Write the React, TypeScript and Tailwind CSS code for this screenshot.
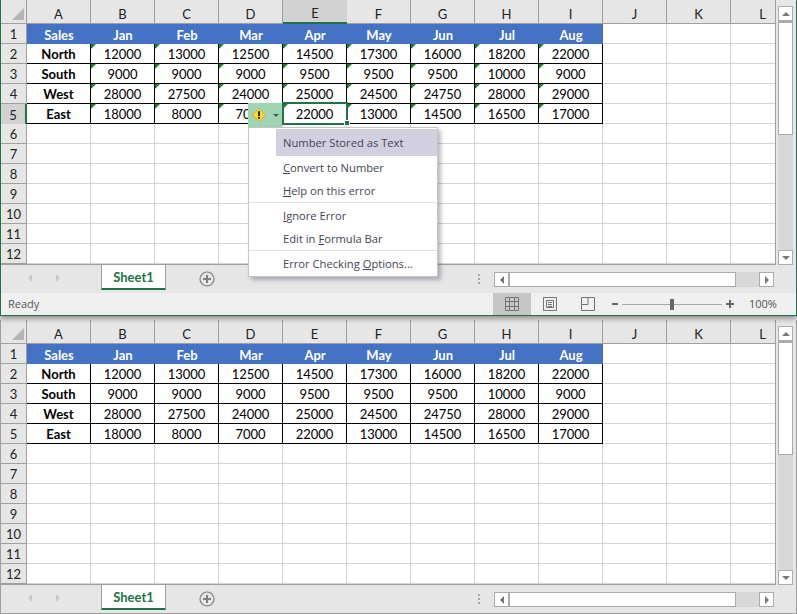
import type { ReactNode } from "react";

const COLS = ["A", "B", "C", "D", "E", "F", "G", "H", "I", "J", "K", "L"];
const ROW_NUMS = [1, 2, 3, 4, 5, 6, 7, 8, 9, 10, 11, 12];

const TABLE = [
  ["Sales", "Jan", "Feb", "Mar", "Apr", "May", "Jun", "Jul", "Aug"],
  ["North", "12000", "13000", "12500", "14500", "17300", "16000", "18200", "22000"],
  ["South", "9000", "9000", "9000", "9500", "9500", "9500", "10000", "9000"],
  ["West", "28000", "27500", "24000", "25000", "24500", "24750", "28000", "29000"],
  ["East", "18000", "8000", "7000", "22000", "13000", "14500", "16500", "17000"],
];

const CELL_FONT = "font-['Lato',sans-serif] text-[13px] leading-none";
const UI_FONT = "font-['Open_Sans',sans-serif]";

function GridCell({ row, col, flagged }: { row: number; col: number; flagged: boolean }) {
  const value = TABLE[row]?.[col];
  const inTable = row < 5 && col < 9;

  if (row === 0 && inTable) {
    return (
      <div className={`flex h-5 items-center justify-center bg-[#4472c4] pt-[2px] font-bold text-white ${CELL_FONT}`}>
        {value}
      </div>
    );
  }

  if (inTable) {
    return (
      <div
        className={`relative flex h-5 items-center justify-center border-r border-b border-black pt-[2px] text-black ${CELL_FONT} ${col === 0 ? "font-bold" : ""}`}
      >
        {flagged && col > 0 && (
          <span className="absolute top-0 left-0 h-0 w-0 border-t-[5px] border-r-[5px] border-t-[#1f7a3c] border-r-transparent" />
        )}
        {value}
      </div>
    );
  }

  return <div className="h-5 border-r border-b border-[#d4d4d4]" />;
}

function GridRow({ n, flagged }: { n: number; flagged: boolean }) {
  const active = flagged && n === 5;
  return (
    <>
      <div
        className={`flex h-5 items-center justify-center pt-[2px] text-[#222] ${CELL_FONT} ${
          active ? "border-r-2 border-[#217346] bg-[#d2d2d2]" : "border-r border-b border-[#9f9f9f] bg-[#e6e6e6]"
        }`}
      >
        {n}
      </div>
      {COLS.map((_, c) => (
        <GridCell key={c} row={n - 1} col={c} flagged={flagged} />
      ))}
    </>
  );
}

function Grid({ flagged }: { flagged: boolean }) {
  return (
    <div className="h-[265px] w-[775px] shrink-0 overflow-hidden border-r border-b border-[#9f9f9f] bg-white">
      <div className="grid w-max grid-cols-[26px_repeat(12,64px)]">
        <div className="relative h-6 border-r border-b border-[#9f9f9f] bg-[#e6e6e6]">
          <span className="absolute right-[2px] bottom-[3px] h-0 w-0 border-b-[12px] border-l-[12px] border-b-[#b4b4b4] border-l-transparent" />
        </div>
        {COLS.map((c) => (
          <div
            key={c}
            className={`flex h-6 items-end justify-center border-b pb-[2px] leading-[18px] text-[#222] ${CELL_FONT} ${
              flagged && c === "E"
                ? "border-b-2 border-[#217346] bg-[#d2d2d2]"
                : "border-r border-[#9f9f9f] bg-[#e6e6e6]"
            }`}
          >
            {c}
          </div>
        ))}
        {ROW_NUMS.map((n) => (
          <GridRow key={n} n={n} flagged={flagged} />
        ))}
      </div>
    </div>
  );
}

function ScrollButton({ dir }: { dir: "up" | "down" | "left" | "right" }) {
  const points = {
    up: "2,8 10,8 6,4",
    down: "2,4 10,4 6,8",
    left: "8,2 8,10 4,6",
    right: "4,2 4,10 8,6",
  }[dir];
  return (
    <div className="flex h-[15px] w-[15px] shrink-0 items-center justify-center border border-[#ababab] bg-white">
      <svg width="12" height="12" viewBox="0 0 12 12">
        <polygon points={points} fill="#777" />
      </svg>
    </div>
  );
}

function VScroll() {
  return (
    <div className="flex h-[265px] w-5 shrink-0 flex-col bg-[#e6e6e6] pt-[6px] pl-[2px]">
      <ScrollButton dir="up" />
      <div className="h-[114px] w-[15px] border-x border-b border-t-2 border-[#ababab] bg-white" />
      <div className="h-[115px] w-[15px] bg-[#d8d8d8]" />
      <ScrollButton dir="down" />
    </div>
  );
}

function TabBar() {
  return (
    <div className="flex h-7 shrink-0 bg-[#e6e6e6]">
      <div className="flex w-[100px] items-center gap-[20px] pb-[2px] pl-[25px]">
        <svg width="8" height="10" viewBox="0 0 8 10">
          <polygon points="6,1 6,9 2,5" fill="#c8c8c8" />
        </svg>
        <svg width="8" height="10" viewBox="0 0 8 10">
          <polygon points="2,1 2,9 6,5" fill="#c8c8c8" />
        </svg>
      </div>
      <div
        className={`flex h-[25px] w-[65px] items-center justify-center border-x border-b-2 border-x-[#9f9f9f] border-b-[#217346] bg-white pt-[2px] font-bold text-[#217346] ${CELL_FONT}`}
      >
        Sheet1
      </div>
      <div className="flex w-[83px] items-center pb-px pl-[33px]">
        <svg width="16" height="16" viewBox="0 0 16 16" fill="none" stroke="#808080">
          <circle cx="8" cy="8" r="7" strokeWidth="1.2" />
          <path d="M4 8h8M8 4v8" strokeWidth="2" />
        </svg>
      </div>
      <div className="flex w-[230px] items-center pb-px pl-[229px]">
        <div className="flex flex-col gap-[2px]">
          <span className="h-[2px] w-[2px] bg-[#aaa]" />
          <span className="h-[2px] w-[2px] bg-[#aaa]" />
          <span className="h-[2px] w-[2px] bg-[#aaa]" />
        </div>
      </div>
      <div className="mt-[7px] ml-[15px] flex h-[15px] w-[280px] items-center self-start">
        <ScrollButton dir="left" />
        <div className="h-[15px] w-[227px] border border-[#ababab] bg-white" />
        <div className="h-[15px] w-[23px] bg-[#d8d8d8]" />
        <ScrollButton dir="right" />
      </div>
    </div>
  );
}

function StatusBar() {
  return (
    <div className="flex h-[22px] shrink-0 items-center bg-[#f0f0f0] text-[#555]">
      <div className={`w-[492px] pl-[7px] text-[11px] ${UI_FONT}`}>Ready</div>
      <div className="flex h-full w-[38px] items-center justify-center bg-[#c6c6c6]">
        <svg width="14" height="14" viewBox="0 0 14 14" fill="none" stroke="#747474">
          <path d="M.5.5h13v13H.5zM.5 4.5h13M.5 9.5h13M4.5.5v13M9.5.5v13" />
        </svg>
      </div>
      <div className="flex h-full w-[38px] items-center justify-center">
        <svg width="14" height="14" viewBox="0 0 14 14" fill="none" stroke="#747474">
          <path d="M.5.5h13v13H.5zM3.5 3.5h7v7h-7zM5 5.5h4M5 7.5h4M5 9.5h4" />
        </svg>
      </div>
      <div className="flex h-full w-[38px] items-center justify-center">
        <svg width="14" height="14" viewBox="0 0 14 14" fill="none" stroke="#747474">
          <path d="M.5.5h13v13H.5zM.5 7.5h6.5v-7" />
        </svg>
      </div>
      <div className="ml-[5px] h-[2px] w-[6px] bg-[#666]" />
      <div className="relative mx-1 h-px w-[100px] bg-[#a8a8a8]">
        <span className="absolute top-[-5px] left-[48px] h-[11px] w-1 bg-[#666]" />
      </div>
      <svg width="8" height="8" viewBox="0 0 8 8" fill="none" stroke="#666" strokeWidth="2">
        <path d="M0 4h8M4 0v8" />
      </svg>
      <div className={`ml-[15px] text-[11px] ${UI_FONT}`}>100%</div>
    </div>
  );
}

function ErrorTag() {
  return (
    <div className="absolute top-[103px] left-[247px] flex h-6 w-[34px] items-center bg-[#a0d5b3] pl-1">
      <svg width="14" height="14" viewBox="0 0 14 14">
        <polygon points="7,0.5 13.5,7 7,13.5 0.5,7" fill="#ffd83b" stroke="#e3a51a" />
        <rect x="6.1" y="3.2" width="1.8" height="5" fill="#222" />
        <rect x="6.1" y="9" width="1.8" height="1.8" fill="#222" />
      </svg>
      <span className="ml-[7px] h-0 w-0 border-x-[3px] border-t-[3px] border-x-transparent border-t-[#555]" />
    </div>
  );
}

function Selection() {
  return (
    <div className="absolute top-[102px] left-[281px] h-[23px] w-[66px] border-2 border-[#217346]">
      <span className="absolute right-[-4px] bottom-[-3px] h-[6px] w-[6px] border border-white bg-[#217346]" />
    </div>
  );
}

function MenuItem({ children }: { children: ReactNode }) {
  return <div className="flex h-[23px] items-center pt-[2px] pl-[34px]">{children}</div>;
}

function ErrorMenu() {
  return (
    <div
      className={`absolute top-[127px] left-[247px] h-[150px] w-[190px] border border-[#c6c6c6] bg-white pt-px text-[11.2px] text-[#444452] shadow-[3px_3px_4px_rgba(60,60,90,0.35)] ${UI_FONT}`}
    >
      <div className="ml-[27px] flex h-[27px] items-center bg-[#d2d0df] pt-[2px] pl-[7px]">Number Stored as Text</div>
      <MenuItem><span><u>C</u>onvert to Number</span></MenuItem>
      <MenuItem><span><u>H</u>elp on this error</span></MenuItem>
      <div className="mb-px h-px bg-[#e2e2e2]" />
      <MenuItem><span><u>I</u>gnore Error</span></MenuItem>
      <MenuItem><span>Edit in <u>F</u>ormula Bar</span></MenuItem>
      <div className="mb-px h-px bg-[#e2e2e2]" />
      <MenuItem><span>Error Checking <u>O</u>ptions...</span></MenuItem>
    </div>
  );
}

function Sheet({ flagged }: { flagged: boolean }) {
  return (
    <div
      className={`relative flex flex-col bg-[#e6e6e6] ${
        flagged
          ? "border-x border-b border-[#217346] shadow-[0_2px_6px_rgba(0,0,0,0.45)]"
          : "border-x border-b border-[#9f9f9f]"
      }`}
    >
      <div className="flex">
        <Grid flagged={flagged} />
        <VScroll />
      </div>
      <TabBar />
      {flagged && <StatusBar />}
      {flagged && (
        <>
          <Selection />
          <ErrorTag />
          <ErrorMenu />
        </>
      )}
    </div>
  );
}

export default function App() {
  return (
    <div className="flex h-[614px] w-[797px] flex-col overflow-hidden bg-[#e6e6e6]">
      <div className="relative z-10">
        <Sheet flagged />
      </div>
      <div className="h-1 shrink-0" />
      <Sheet flagged={false} />
    </div>
  );
}
